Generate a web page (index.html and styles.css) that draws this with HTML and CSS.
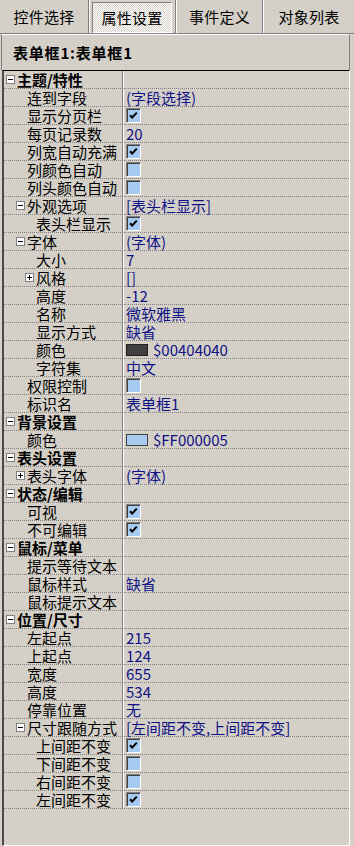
FILE: index.html
```html
<!DOCTYPE html>
<html lang="zh-CN">
<head>
<meta charset="utf-8">
<title>属性设置</title>
<link rel="stylesheet" href="styles.css">
</head>
<body>
<div class="tabs">
  <div class="tab t1">控件选择</div>
  <div class="tab t2"><span class="pressed">属性设置</span></div>
  <div class="tab t3">事件定义</div>
  <div class="tab t4">对象列表</div>
</div>
<div class="title">表单框1:表单框1</div>
<div class="grid">
  <div class="row cat lv0"><div class="name"><svg class="tg" viewBox="0 0 9 9"><rect x="0.5" y="0.5" width="8" height="8" fill="#fff" stroke="#808080"/><path d="M2 4.5h5" stroke="#000"/></svg>主题/特性</div><div class="val"></div></div>
  <div class="row lv1"><div class="name"><span class="tg"></span>连到字段</div><div class="val">(字段选择)</div></div>
  <div class="row lv1"><div class="name"><span class="tg"></span>显示分页栏</div><div class="val"><span class="cb"><svg viewBox="0 0 11 11" class="ck"><path d="M2 5.2L4.2 7.5L8.8 2.6" fill="none" stroke="#000" stroke-width="2"/></svg></span></div></div>
  <div class="row lv1"><div class="name"><span class="tg"></span>每页记录数</div><div class="val">20</div></div>
  <div class="row lv1"><div class="name"><span class="tg"></span>列宽自动充满</div><div class="val"><span class="cb"><svg viewBox="0 0 11 11" class="ck"><path d="M2 5.2L4.2 7.5L8.8 2.6" fill="none" stroke="#000" stroke-width="2"/></svg></span></div></div>
  <div class="row lv1"><div class="name"><span class="tg"></span>列颜色自动</div><div class="val"><span class="cb"></span></div></div>
  <div class="row lv1"><div class="name"><span class="tg"></span>列头颜色自动</div><div class="val"><span class="cb"></span></div></div>
  <div class="row lv1"><div class="name"><svg class="tg" viewBox="0 0 9 9"><rect x="0.5" y="0.5" width="8" height="8" fill="#fff" stroke="#808080"/><path d="M2 4.5h5" stroke="#000"/></svg>外观选项</div><div class="val">[表头栏显示]</div></div>
  <div class="row lv2"><div class="name"><span class="tg"></span>表头栏显示</div><div class="val"><span class="cb"><svg viewBox="0 0 11 11" class="ck"><path d="M2 5.2L4.2 7.5L8.8 2.6" fill="none" stroke="#000" stroke-width="2"/></svg></span></div></div>
  <div class="row lv1"><div class="name"><svg class="tg" viewBox="0 0 9 9"><rect x="0.5" y="0.5" width="8" height="8" fill="#fff" stroke="#808080"/><path d="M2 4.5h5" stroke="#000"/></svg>字体</div><div class="val">(字体)</div></div>
  <div class="row lv2"><div class="name"><span class="tg"></span>大小</div><div class="val">7</div></div>
  <div class="row lv2"><div class="name"><svg class="tg" viewBox="0 0 9 9"><rect x="0.5" y="0.5" width="8" height="8" fill="#fff" stroke="#808080"/><path d="M2 4.5h5M4.5 2v5" stroke="#000"/></svg>风格</div><div class="val">[]</div></div>
  <div class="row lv2"><div class="name"><span class="tg"></span>高度</div><div class="val">-12</div></div>
  <div class="row lv2"><div class="name"><span class="tg"></span>名称</div><div class="val">微软雅黑</div></div>
  <div class="row lv2"><div class="name"><span class="tg"></span>显示方式</div><div class="val">缺省</div></div>
  <div class="row lv2"><div class="name"><span class="tg"></span>颜色</div><div class="val"><span class="sw dark"></span>$00404040</div></div>
  <div class="row lv2"><div class="name"><span class="tg"></span>字符集</div><div class="val">中文</div></div>
  <div class="row lv1"><div class="name"><span class="tg"></span>权限控制</div><div class="val"><span class="cb"></span></div></div>
  <div class="row lv1"><div class="name"><span class="tg"></span>标识名</div><div class="val">表单框1</div></div>
  <div class="row cat lv0"><div class="name"><svg class="tg" viewBox="0 0 9 9"><rect x="0.5" y="0.5" width="8" height="8" fill="#fff" stroke="#808080"/><path d="M2 4.5h5" stroke="#000"/></svg>背景设置</div><div class="val"></div></div>
  <div class="row lv1"><div class="name"><span class="tg"></span>颜色</div><div class="val"><span class="sw light"></span>$FF000005</div></div>
  <div class="row cat lv0"><div class="name"><svg class="tg" viewBox="0 0 9 9"><rect x="0.5" y="0.5" width="8" height="8" fill="#fff" stroke="#808080"/><path d="M2 4.5h5" stroke="#000"/></svg>表头设置</div><div class="val"></div></div>
  <div class="row lv1"><div class="name"><svg class="tg" viewBox="0 0 9 9"><rect x="0.5" y="0.5" width="8" height="8" fill="#fff" stroke="#808080"/><path d="M2 4.5h5M4.5 2v5" stroke="#000"/></svg>表头字体</div><div class="val">(字体)</div></div>
  <div class="row cat lv0"><div class="name"><svg class="tg" viewBox="0 0 9 9"><rect x="0.5" y="0.5" width="8" height="8" fill="#fff" stroke="#808080"/><path d="M2 4.5h5" stroke="#000"/></svg>状态/编辑</div><div class="val"></div></div>
  <div class="row lv1"><div class="name"><span class="tg"></span>可视</div><div class="val"><span class="cb"><svg viewBox="0 0 11 11" class="ck"><path d="M2 5.2L4.2 7.5L8.8 2.6" fill="none" stroke="#000" stroke-width="2"/></svg></span></div></div>
  <div class="row lv1"><div class="name"><span class="tg"></span>不可编辑</div><div class="val"><span class="cb"><svg viewBox="0 0 11 11" class="ck"><path d="M2 5.2L4.2 7.5L8.8 2.6" fill="none" stroke="#000" stroke-width="2"/></svg></span></div></div>
  <div class="row cat lv0"><div class="name"><svg class="tg" viewBox="0 0 9 9"><rect x="0.5" y="0.5" width="8" height="8" fill="#fff" stroke="#808080"/><path d="M2 4.5h5" stroke="#000"/></svg>鼠标/菜单</div><div class="val"></div></div>
  <div class="row lv1"><div class="name"><span class="tg"></span>提示等待文本</div><div class="val"></div></div>
  <div class="row lv1"><div class="name"><span class="tg"></span>鼠标样式</div><div class="val">缺省</div></div>
  <div class="row lv1"><div class="name"><span class="tg"></span>鼠标提示文本</div><div class="val"></div></div>
  <div class="row cat lv0"><div class="name"><svg class="tg" viewBox="0 0 9 9"><rect x="0.5" y="0.5" width="8" height="8" fill="#fff" stroke="#808080"/><path d="M2 4.5h5" stroke="#000"/></svg>位置/尺寸</div><div class="val"></div></div>
  <div class="row lv1"><div class="name"><span class="tg"></span>左起点</div><div class="val">215</div></div>
  <div class="row lv1"><div class="name"><span class="tg"></span>上起点</div><div class="val">124</div></div>
  <div class="row lv1"><div class="name"><span class="tg"></span>宽度</div><div class="val">655</div></div>
  <div class="row lv1"><div class="name"><span class="tg"></span>高度</div><div class="val">534</div></div>
  <div class="row lv1"><div class="name"><span class="tg"></span>停靠位置</div><div class="val">无</div></div>
  <div class="row lv1"><div class="name"><svg class="tg" viewBox="0 0 9 9"><rect x="0.5" y="0.5" width="8" height="8" fill="#fff" stroke="#808080"/><path d="M2 4.5h5" stroke="#000"/></svg>尺寸跟随方式</div><div class="val">[左间距不变,上间距不变]</div></div>
  <div class="row lv2"><div class="name"><span class="tg"></span>上间距不变</div><div class="val"><span class="cb"><svg viewBox="0 0 11 11" class="ck"><path d="M2 5.2L4.2 7.5L8.8 2.6" fill="none" stroke="#000" stroke-width="2"/></svg></span></div></div>
  <div class="row lv2"><div class="name"><span class="tg"></span>下间距不变</div><div class="val"><span class="cb"></span></div></div>
  <div class="row lv2"><div class="name"><span class="tg"></span>右间距不变</div><div class="val"><span class="cb"></span></div></div>
  <div class="row lv2"><div class="name"><span class="tg"></span>左间距不变</div><div class="val"><span class="cb"><svg viewBox="0 0 11 11" class="ck"><path d="M2 5.2L4.2 7.5L8.8 2.6" fill="none" stroke="#000" stroke-width="2"/></svg></span></div></div>
</div>
</body>
</html>
```

FILE: styles.css
```css
html, body {
  margin: 0;
  padding: 0;
}
body {
  width: 354px;
  height: 846px;
  background: #d4d0c8;
  font-family: "Noto Sans CJK SC", "Noto Sans", sans-serif;
  font-size: 15px;
  color: #000;
  display: flex;
  flex-direction: column;
  overflow: hidden;
}

/* tab strip */
.tabs {
  display: flex;
  height: 34px;
  box-sizing: border-box;
  border-bottom: 1px solid #808080;
  flex-shrink: 0;
}
.tab {
  display: flex;
  align-items: center;
  justify-content: center;
  box-sizing: border-box;
  line-height: 17px;
  white-space: nowrap;
  letter-spacing: 0.3px;
}
.t1 { width: 89px; border-right: 1px solid #808080; }
.t2 {
  width: 87px;
  border-left: 1px solid #fff;
  border-right: 1px solid #808080;
  align-items: stretch;
  padding: 2px 3px 0 2px;
}
.t3 { width: 87px; border-left: 1px solid #fff; border-right: 1px solid #808080; }
.t4 { width: 91px; border-left: 1px solid #fff; }
.pressed {
  flex: 1;
  display: flex;
  align-items: center;
  justify-content: center;
  border: 1px solid;
  border-color: #808080 #fff #fff #808080;
  background: repeating-conic-gradient(#ffffff 0 25%, #d4d0c8 0 50%) 0 0 / 2px 2px;
}

/* title */
.title {
  height: 35px;
  flex-shrink: 0;
  margin: 0 4px 0 1px;
  border-top: 1px solid #fff;
  border-left: 1px solid #808080;
  border-right: 1px solid #808080;
  padding-left: 11px;
  display: flex;
  align-items: center;
  font-weight: bold;
  line-height: 17px;
  letter-spacing: 0.8px;
}

/* property grid */
.grid {
  flex: 1;
  margin: 0 4px 0 2px;
  border-top: 1px solid #000;
  border-left: 2px solid #4a4a4a;
  border-right: 1px solid #fff;
  border-bottom: 1px solid #fff;
}
.row {
  display: flex;
  height: 18px;
  box-sizing: border-box;
  border-bottom: 1px dotted #808080;
  line-height: 17px;
}
.name {
  width: 119px;
  box-sizing: border-box;
  border-right: 1px solid #808080;
  display: flex;
  align-items: center;
  white-space: nowrap;
}
.val {
  flex: 1;
  border-left: 1px solid #fff;
  padding-left: 2px;
  display: flex;
  align-items: center;
  color: #101085;
  white-space: nowrap;
}
.lv0 .name { padding-left: 2px; }
.lv1 .name { padding-left: 12px; }
.lv2 .name { padding-left: 21px; }
.cat .name { font-weight: bold; }

.tg {
  width: 9px;
  height: 9px;
  margin-right: 2px;
  flex-shrink: 0;
  display: block;
  shape-rendering: crispEdges;
}

.cb {
  width: 15px;
  height: 15px;
  box-sizing: border-box;
  border: 1px solid;
  border-color: #808080 #fff #fff #808080;
  box-shadow: inset 1px 1px 0 #404040;
  background: #a6caf0;
  display: flex;
  align-items: flex-start;
  justify-content: flex-start;
}
.ck {
  width: 11px;
  height: 11px;
  margin: 1px 0 0 1px;
  display: block;
}

.sw {
  width: 22px;
  height: 12px;
  box-sizing: border-box;
  border: 1px solid #404040;
  margin-right: 5px;
  flex-shrink: 0;
}
.sw.dark { background: #404040; border-color: #1e1e1e; }
.sw.light { background: #a6caf0; border-color: #404040; }
```
